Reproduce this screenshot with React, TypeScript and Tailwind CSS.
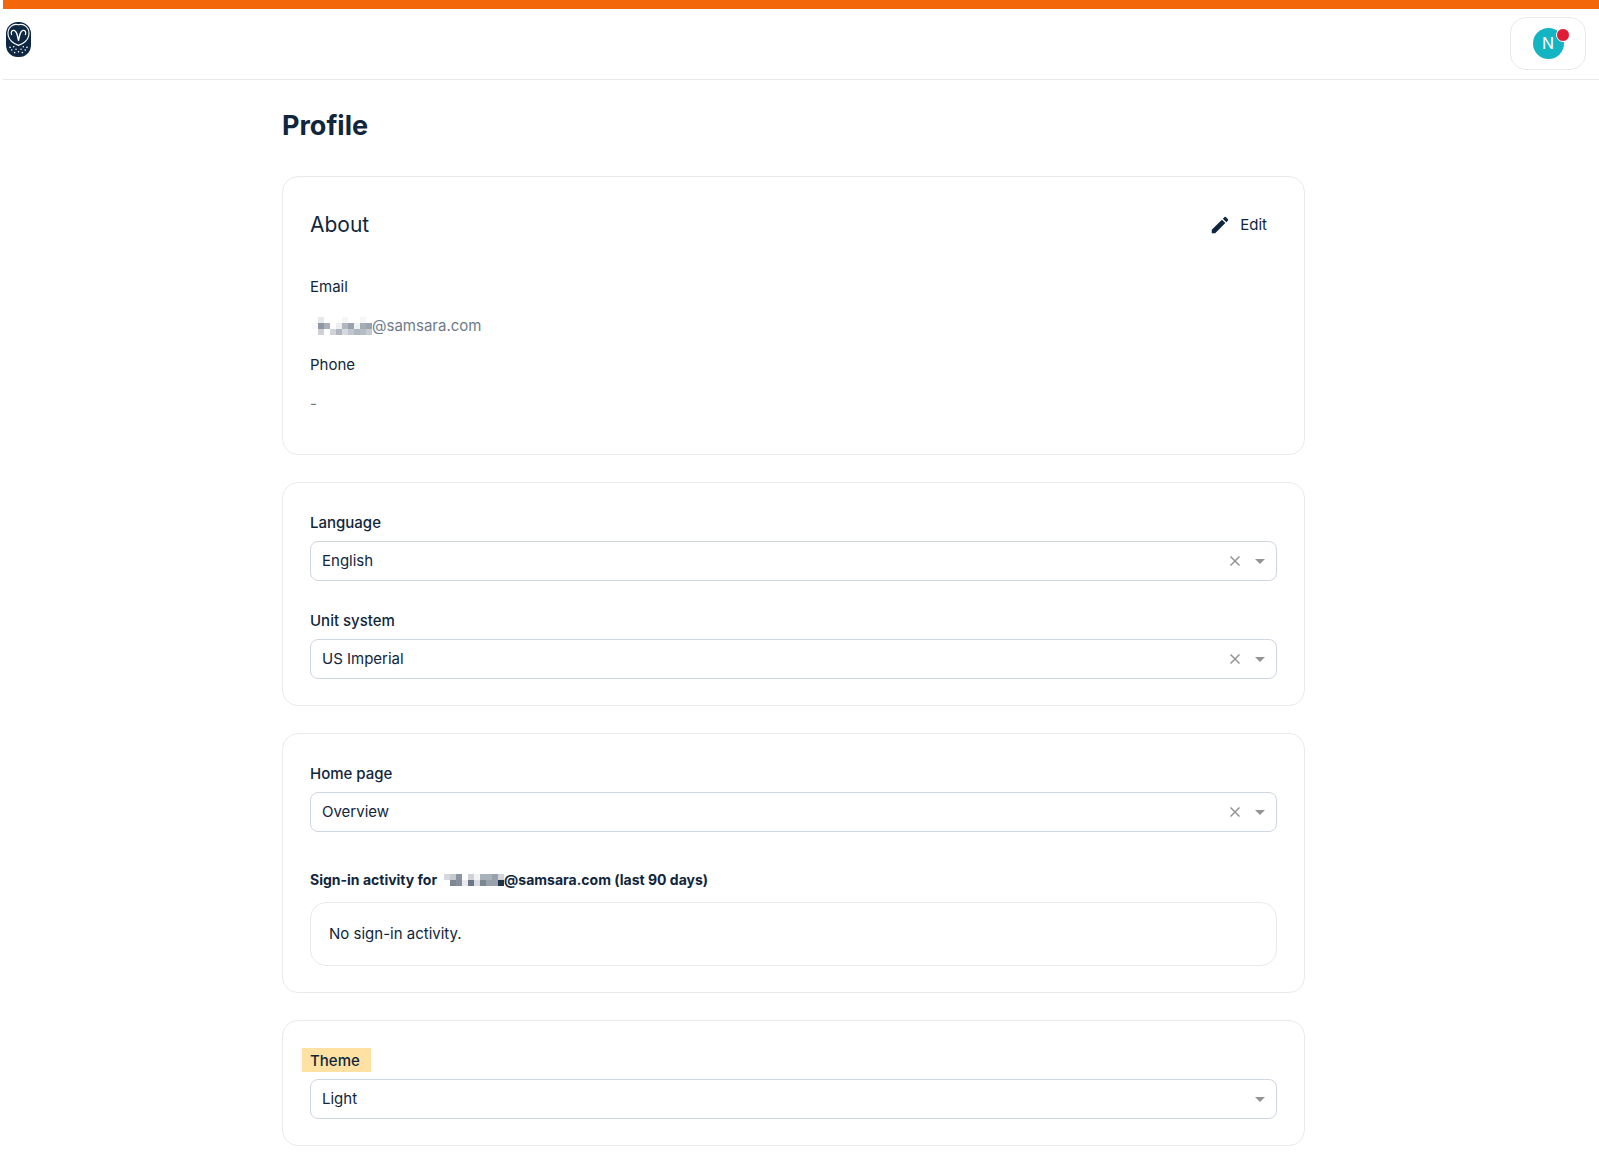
import React from 'react';
import { MdEdit } from 'react-icons/md';
import { twMerge } from 'tailwind-merge';

type SelectFieldProps = {
  id: string;
  label: string;
  options: string[];
  clearable?: boolean;
  labelClassName?: string;
};

const EMAIL_MASK = [
  ['', '#e6e9ec', '', '', '', '#f5f6f8', '', '', '#f5f6f8', ''],
  ['#f8f9fa', '#8e97a3', '#a9b0b9', '', '#eceef0', '#b0b7c0', '#98a1ac', '#f0f1f3', '#a4acb6', '#9ba4ae'],
  ['', '#cdd1d6', '', '#d0d4d9', '#b0b6bf', '#d6d9dd', '#c0c6cd', '#b0b7c1', '#b5bcc5', '#c6cbd1'],
];

const SIGN_IN_MASK = [
  ['#d5d8dd', '#c6cad0', '#8b95a1', '', '#cfd3d8', '#f2f3f5', '#aab1ba', '#aab1ba', '#98a1ac', '#d0d4d9'],
  ['', '#7c8794', '#86909c', '#e8eaed', '#6b7887', '#d8dbdf', '#7c8794', '#98a1ac', '#98a1ac', '#1f3347'],
];

// Pixelated block that hides the user part of an address
const PixelMask = ({ rows }: { rows: string[][] }) => (
  <svg width={rows[0].length * 6} height={rows.length * 6} shapeRendering="crispEdges" aria-hidden="true" className="shrink-0">
    {rows.map((row, y) =>
      row.map((fill, x) => fill && <rect key={`${x}-${y}`} x={x * 6} y={y * 6} width="6" height="6" fill={fill} />)
    )}
  </svg>
);

const OwlLogo = () => (
  <svg width="25" height="35" viewBox="0 0 26 35" preserveAspectRatio="none" fill="none" aria-hidden="true">
    <rect width="26" height="35" rx="12" fill="#0e2742" />
    <path
      d="M13 2.8C10.6 1.9 7.4 2.5 5.2 4.4C2.4 6.8 1.6 10.4 2.4 13.8C3.6 18.6 8 21.6 13 23.4C18 21.6 22.4 18.6 23.6 13.8C24.4 10.4 23.6 6.8 20.8 4.4C18.6 2.5 15.4 1.9 13 2.8Z"
      stroke="#fff"
      strokeWidth="1.2"
    />
    <path
      d="M5.8 12.6C4.8 10.2 6.2 8 8.4 8.4C11.2 9 12 13.4 13 19C14 13.4 14.8 9 17.6 8.4C19.8 8 21.2 10.2 20.2 12.6"
      stroke="#fff"
      strokeWidth="1.3"
      strokeLinecap="round"
    />
    <g fill="#fff">
      <circle cx="4.2" cy="25.4" r=".8" />
      <circle cx="8" cy="24.8" r=".8" />
      <circle cx="18" cy="24.8" r=".8" />
      <circle cx="21.8" cy="25.4" r=".8" />
      <circle cx="6" cy="28" r=".8" />
      <circle cx="10.4" cy="27.2" r=".8" />
      <circle cx="15.6" cy="27.2" r=".8" />
      <circle cx="20" cy="28" r=".8" />
      <circle cx="9" cy="30.6" r=".8" />
      <circle cx="13" cy="29.8" r=".8" />
      <circle cx="17" cy="30.6" r=".8" />
    </g>
  </svg>
);

const Card = ({ children }: { children: React.ReactNode }) => (
  <section className="rounded-2xl border border-[#e8eaee] px-[27px] pt-[27px] pb-[26px]">{children}</section>
);

const SelectField = ({ id, label, options, clearable = true, labelClassName }: SelectFieldProps) => (
  <div className="flex flex-col items-start gap-[7px]">
    <label htmlFor={id} className={twMerge('pt-[2px] leading-[22px] font-medium', labelClassName)}>
      {label}
    </label>
    <div className="relative w-full">
      <select
        id={id}
        className="block h-10 w-full appearance-none rounded-lg border border-[#cfd6df] bg-white px-[11px]"
      >
        {options.map((option) => (
          <option key={option}>{option}</option>
        ))}
      </select>
      <div className="pointer-events-none absolute inset-y-0 right-3 flex items-center gap-[15px] text-[#949494]">
        {clearable && (
          <button type="button" aria-label={`Clear ${label}`} className="pointer-events-auto">
            <svg width="10" height="10" viewBox="0 0 10 10" stroke="currentColor" strokeWidth="1.5">
              <path d="M.5 .5L9.5 9.5M9.5 .5L.5 9.5" />
            </svg>
          </button>
        )}
        <svg width="10" height="5" viewBox="0 0 10 5" fill="currentColor" aria-hidden="true">
          <path d="M0 0H10L5 5Z" />
        </svg>
      </div>
    </div>
  </div>
);

const Header = () => (
  <header className="ml-[3px] flex h-[80px] items-center justify-between border-t-[9px] border-b border-t-[#f3670a] border-b-[#e6e8ec] pr-[13px] pb-[2px] pl-[3px]">
    <a href="#" aria-label="Home" className="mb-2">
      <OwlLogo />
    </a>
    <button
      type="button"
      aria-label="Account menu"
      className="flex h-[53px] w-[76px] items-center justify-center rounded-2xl border border-[#e8eaee]"
    >
      <span className="relative flex h-[31px] w-[31px] items-center justify-center rounded-full bg-[#12b5c1] text-base text-white">
        N
        <span className="absolute top-0 -right-[6px] h-[14px] w-[14px] rounded-full border border-white bg-[#e11d36]" />
      </span>
    </button>
  </header>
);

const App = () => {
  return (
    <div className="min-h-screen bg-white font-['Inter',sans-serif] text-[15px] leading-6 text-[#10263d]">
      <Header />
      <div className="pr-[15px] pl-[3px]">
        <main className="mx-auto flex max-w-[1023px] flex-col gap-[27px] pt-7 pb-7">
          <h1 className="mb-[5px] text-[27px] leading-9 font-bold">Profile</h1>

          <Card>
            <div className="mb-[22px] flex h-[41px] items-center justify-between">
              <h2 className="text-[21px] leading-7">About</h2>
              <button type="button" className="flex items-center gap-[9px] pr-[10px]">
                <MdEdit size={22} />
                Edit
              </button>
            </div>
            <dl className="mb-[5px] leading-[39px]">
              <dt>Email</dt>
              <dd className="flex items-center pl-[2px] text-[#6e7b8b]">
                <PixelMask rows={EMAIL_MASK} />
                @samsara.com
              </dd>
              <dt>Phone</dt>
              <dd className="text-[#6e7b8b]">-</dd>
            </dl>
          </Card>

          <Card>
            <div className="flex flex-col gap-[27px]">
              <SelectField id="language" label="Language" options={['English']} />
              <SelectField id="unit-system" label="Unit system" options={['US Imperial']} />
            </div>
          </Card>

          <Card>
            <SelectField id="home-page" label="Home page" options={['Overview']} />
            <h3 className="mt-9 mb-[10px] flex items-center text-sm leading-6 font-bold">
              <span className="mr-[7px]">Sign-in activity for</span>
              <PixelMask rows={SIGN_IN_MASK} />
              @samsara.com (last 90 days)
            </h3>
            <div className="rounded-2xl border border-[#e8eaee] px-[18px] py-[19px]">
              <p>No sign-in activity.</p>
            </div>
          </Card>

          <Card>
            <SelectField
              id="theme"
              label="Theme"
              options={['Light']}
              clearable={false}
              labelClassName="-ml-2 bg-[#ffe1a3] pr-[11px] pl-2"
            />
          </Card>
        </main>
      </div>
    </div>
  );
};

export default App;
